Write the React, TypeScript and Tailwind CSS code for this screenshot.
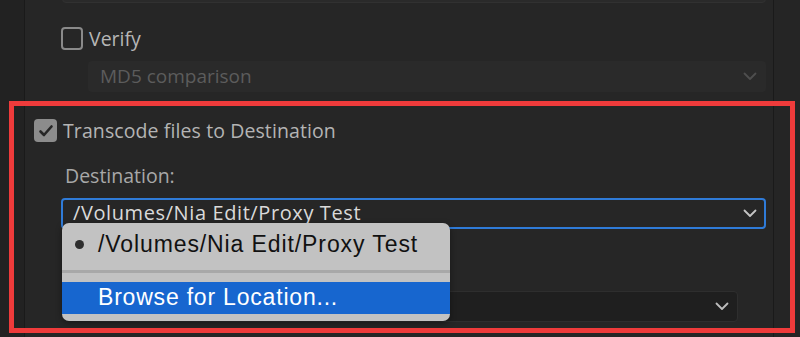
import React from "react";

function Chevron({ className }: { className: string }) {
  return (
    <svg width="14" height="9" viewBox="0 0 14 9" className={className} fill="none">
      <polyline points="1.5,1.5 7,7 12.5,1.5" stroke="currentColor" strokeWidth="1.8" strokeLinecap="round" strokeLinejoin="round" />
    </svg>
  );
}

function Checkbox({ checked }: { checked?: boolean }) {
  if (checked) {
    return (
      <div className="w-[23px] h-[23px] rounded-[4px] bg-[#8c8c8c] flex items-center justify-center shrink-0">
        <svg width="16" height="14" viewBox="0 0 16 14" fill="none">
          <polyline points="2.5,7.5 6,11 13.5,2.5" stroke="#262626" strokeWidth="2.6" strokeLinecap="round" strokeLinejoin="round" />
        </svg>
      </div>
    );
  }
  return <div className="w-[22px] h-[23px] rounded-[4px] border-2 border-[#8a8a8a] shrink-0" />;
}

export default function App() {
  const ui = { fontFamily: '"Open Sans", "DejaVu Sans", sans-serif' };
  const mac = { fontFamily: '"Liberation Sans", Arial, sans-serif' };

  return (
    <div className="relative w-[800px] h-[337px] overflow-hidden bg-[#242424] flex" style={ui}>
      {/* left gutter */}
      <div className="w-[25px] shrink-0 bg-[#222222] border-r border-[#1a1a1a]" />

      {/* main panel */}
      <div className="flex-1 bg-[#262626] border-r border-[#1a1a1a] pr-[7px]">
        <div className="flex flex-col -mt-[28px]">
          <div className="ml-[37px] h-[31px] rounded-[4px] bg-[#2a2a2a] border border-[#313131]" />

          <div className="ml-[36px] mt-[24px] flex items-center gap-[6px] h-[23px]">
            <Checkbox />
            <span className="text-[19.5px] font-medium text-[#b6b6b6] leading-none">Verify</span>
          </div>

          <div className="ml-[63px] mt-[11px] h-[31px] rounded-[4px] bg-[#2a2a2a] flex items-center justify-between pl-[12px] pr-[9px]">
            <span className="text-[19px] text-[#5c5c5c] leading-none">MD5 comparison</span>
            <Chevron className="text-[#4e4e4e]" />
          </div>

          <div className="ml-[9px] mt-[27px] flex items-center gap-[6px] h-[23px]">
            <Checkbox checked />
            <span className="text-[19.5px] font-medium tracking-[0.1px] text-[#b4b4b4] leading-none">Transcode files to Destination</span>
          </div>

          <div className="ml-[40px] mt-[24px] text-[19.5px] font-medium text-[#a8a8a8] leading-none">Destination:</div>

          <div className="relative ml-[36px] mt-[12px]">
            <div className="h-[31px] rounded-[4px] bg-[#262626] border-2 border-[#2f7bd8] flex items-center justify-between pl-[10px] pr-[7px]">
              <span className="text-[20px] font-medium tracking-[0.6px] text-[#dadada] leading-none">/Volumes/Nia Edit/Proxy Test</span>
              <Chevron className="text-[#c4c4c4]" />
            </div>

            {/* popup menu */}
            <div
              className="absolute left-[1px] top-[25px] w-[388px] rounded-[7px] bg-[#c2c2c2] shadow-[0_2px_6px_rgba(0,0,0,0.4)] pt-[5px] pb-[7px] z-10"
              style={mac}
            >
              <div className="h-[33px] flex items-center">
                <span className="w-[9px] h-[9px] rounded-full bg-[#2e2e2e] ml-[13px] mr-[14px]" />
                <span className="text-[23px] tracking-[0.9px] text-[#111111] leading-none">/Volumes/Nia Edit/Proxy Test</span>
              </div>
              <div className="h-[9px]" />
              <div className="h-[3px] bg-[#a8a8a8]" />
              <div className="h-[9px]" />
              <div className="h-[32px] bg-[#1766cf] flex items-center pl-[36px]">
                <span className="text-[23px] tracking-[0.8px] text-white leading-none">Browse for Location...</span>
              </div>
            </div>
          </div>

          <div className="ml-[63px] mr-[28px] mt-[62px] h-[31px] rounded-[4px] bg-[#1f1f1f] border border-[#2e2e2e] flex items-center justify-end pr-[8px]">
            <Chevron className="text-[#bdbdbd]" />
          </div>

          <div className="ml-[40px] mt-[13px] text-[19.5px] font-medium text-[#a8a8a8] leading-none">Preset:</div>
        </div>
      </div>

      {/* right gutter */}
      <div className="w-[26px] shrink-0 bg-[#252525]" />

      {/* annotation */}
      <div className="absolute left-[9px] top-[101px] w-[786px] h-[232px] border-[5px] border-[#ef3b3b] pointer-events-none z-20" />
    </div>
  );
}
